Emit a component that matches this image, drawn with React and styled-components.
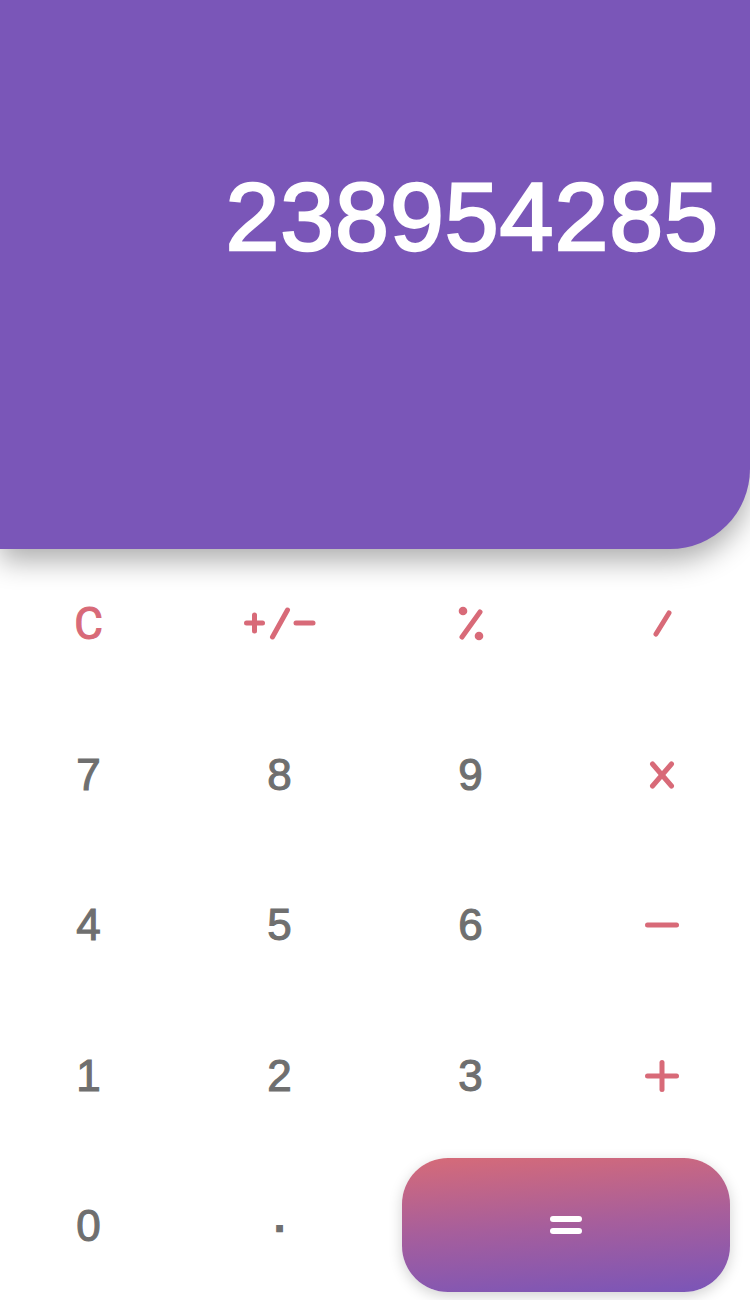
import React from "react";
import styled, { createGlobalStyle } from "styled-components";

const GlobalStyle = createGlobalStyle`
  html, body {
    margin: 0;
    padding: 0;
    background: #ffffff;
  }
  body {
    font-family: "Liberation Sans", Arial, sans-serif;
  }
`;

const PINK = "#d86a78";
const GREY = "#6f6f6f";

const Screen = styled.div`
  width: 750px;
  height: 1300px;
  display: flex;
  flex-direction: column;
  overflow: hidden;
  background: #fff;
`;

const Display = styled.div`
  position: relative;
  z-index: 1;
  height: 549px;
  box-sizing: border-box;
  padding: 168px 31px 0 0;
  background: #7a56b8;
  border-bottom-right-radius: 80px;
  box-shadow: 0 12px 28px rgba(0, 0, 0, 0.32);
  display: flex;
  justify-content: flex-end;
  align-items: flex-start;
`;

const Value = styled.div`
  color: #fff;
  font-family: "Liberation Sans", Arial, sans-serif;
  font-size: 97px;
  line-height: 1;
  letter-spacing: 0.9px;
  -webkit-text-stroke: 2.4px #fff;
`;

const Keypad = styled.div`
  display: grid;
  grid-template-columns: repeat(4, 137px);
  grid-auto-rows: 134px;
  column-gap: 54px;
  row-gap: 16.5px;
  padding: 7px 20px;
`;

const Key = styled.button`
  border: none;
  background: transparent;
  padding: 2px 0 0;
  display: flex;
  align-items: center;
  justify-content: center;
  font-family: ${(p) => (p.$accent ? "Roboto" : "'Liberation Sans'")}, Arial, sans-serif;
  font-size: 44px;
  color: ${(p) => (p.$accent ? PINK : GREY)};
  -webkit-text-stroke: ${(p) => (p.$dot ? "2.6px" : "1.1px")} ${(p) => (p.$accent ? PINK : GREY)};
  cursor: pointer;
`;

const EqualsKey = styled.button`
  grid-column: span 2;
  border: none;
  border-radius: 46px;
  background: linear-gradient(176deg, #d66b78 0%, #a65e9c 50%, #7a55b8 100%);
  box-shadow: 0 4px 14px rgba(0, 0, 0, 0.18);
  display: flex;
  align-items: center;
  justify-content: center;
  cursor: pointer;
`;

const Icon = ({ w = 40, h = 40, color = PINK, sw = 5, children }) => (
  <svg
    width={w}
    height={h}
    viewBox={`0 0 ${w} ${h}`}
    fill="none"
    stroke={color}
    strokeWidth={sw}
    strokeLinecap="round"
  >
    {children}
  </svg>
);

const PlusMinus = () => (
  <Icon w={80} h={40}>
    <line x1="6.5" y1="19" x2="22.5" y2="19" />
    <line x1="14.5" y1="11" x2="14.5" y2="27" />
    <line x1="32.5" y1="33" x2="47.5" y2="6" />
    <line x1="56" y1="19" x2="73" y2="19" />
  </Icon>
);

const Percent = () => (
  <Icon w={30} h={40}>
    <line x1="6" y1="33" x2="24" y2="8" />
    <circle cx="7" cy="7" r="4.3" fill={PINK} stroke="none" />
    <circle cx="23" cy="32" r="4.3" fill={PINK} stroke="none" />
  </Icon>
);

const Slash = () => (
  <Icon w={30} h={36}>
    <line x1="9" y1="28" x2="22" y2="7" />
  </Icon>
);

const Times = () => (
  <Icon w={30} h={30}>
    <line x1="5.5" y1="4" x2="24.5" y2="26" />
    <line x1="24.5" y1="4" x2="5.5" y2="26" />
  </Icon>
);

const Minus = () => (
  <Icon>
    <line x1="5.5" y1="20" x2="34.5" y2="20" />
  </Icon>
);

const Plus = () => (
  <Icon>
    <line x1="5.5" y1="20" x2="34.5" y2="20" />
    <line x1="20" y1="6.5" x2="20" y2="33.5" />
  </Icon>
);

const Equals = () => (
  <Icon w={40} h={24} color="#fff" sw={6}>
    <line x1="7" y1="6" x2="33" y2="6" />
    <line x1="7" y1="18" x2="33" y2="18" />
  </Icon>
);

const keys = [
  { label: "C", accent: true },
  { icon: <PlusMinus /> },
  { icon: <Percent /> },
  { icon: <Slash /> },
  { label: "7" },
  { label: "8" },
  { label: "9" },
  { icon: <Times /> },
  { label: "4" },
  { label: "5" },
  { label: "6" },
  { icon: <Minus /> },
  { label: "1" },
  { label: "2" },
  { label: "3" },
  { icon: <Plus /> },
  { label: "0" },
  { label: "·", dot: true },
];

export default function App() {
  return (
    <>
      <GlobalStyle />
      <Screen>
        <Display>
          <Value>238954285</Value>
        </Display>
        <Keypad>
          {keys.map((k, i) => (
            <Key key={i} $accent={k.accent} $dot={k.dot}>
              {k.icon || k.label}
            </Key>
          ))}
          <EqualsKey>
            <Equals />
          </EqualsKey>
        </Keypad>
      </Screen>
    </>
  );
}
